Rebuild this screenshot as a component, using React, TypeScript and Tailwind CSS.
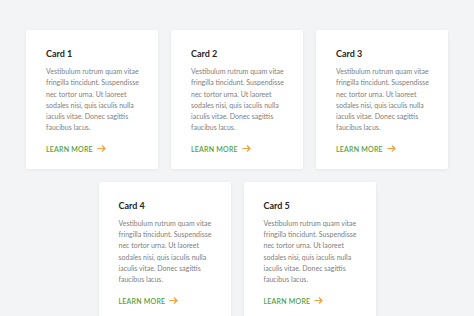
import React from "react";

const body =
  "Vestibulum rutrum quam vitae fringilla tincidunt. Suspendisse nec tortor urna. Ut laoreet sodales nisi, quis iaculis nulla iaculis vitae. Donec sagittis faucibus lacus.";

function Card({ title }: { title: string }) {
  return (
    <div className="w-[132px] bg-white rounded-[2px] shadow-[0_1px_4px_rgba(0,0,0,0.06)] pl-[20px] pr-[14px] pt-[18px] pb-[15px]">
      <div className="text-[9px] leading-[12px] font-bold text-[#262626]">{title}</div>
      <p className="mt-[6px] text-[7px] leading-[11.3px] text-[#808080]">{body}</p>
      <a className="mt-[10px] flex items-center gap-[4px] text-[7px] leading-[10px] font-semibold tracking-[0.03em] text-[#55a044]">
        LEARN MORE
        <svg width="9" height="7" viewBox="0 0 9 7" fill="none" stroke="#f0a03c" strokeWidth="1.2" strokeLinecap="round" strokeLinejoin="round">
          <path d="M0.8 3.5H8M5.2 0.8L8 3.5L5.2 6.2" />
        </svg>
      </a>
    </div>
  );
}

export default function App() {
  return (
    <div
      className="min-h-[316px] w-full bg-[#f3f4f6] pt-[30px] overflow-hidden"
      style={{ fontFamily: 'Lato, "Open Sans", sans-serif' }}
    >
      <div className="mx-auto max-w-[422px] flex flex-wrap justify-center gap-x-[13px] gap-y-[13px]">
        {["Card 1", "Card 2", "Card 3", "Card 4", "Card 5"].map((t) => (
          <Card key={t} title={t} />
        ))}
      </div>
    </div>
  );
}
